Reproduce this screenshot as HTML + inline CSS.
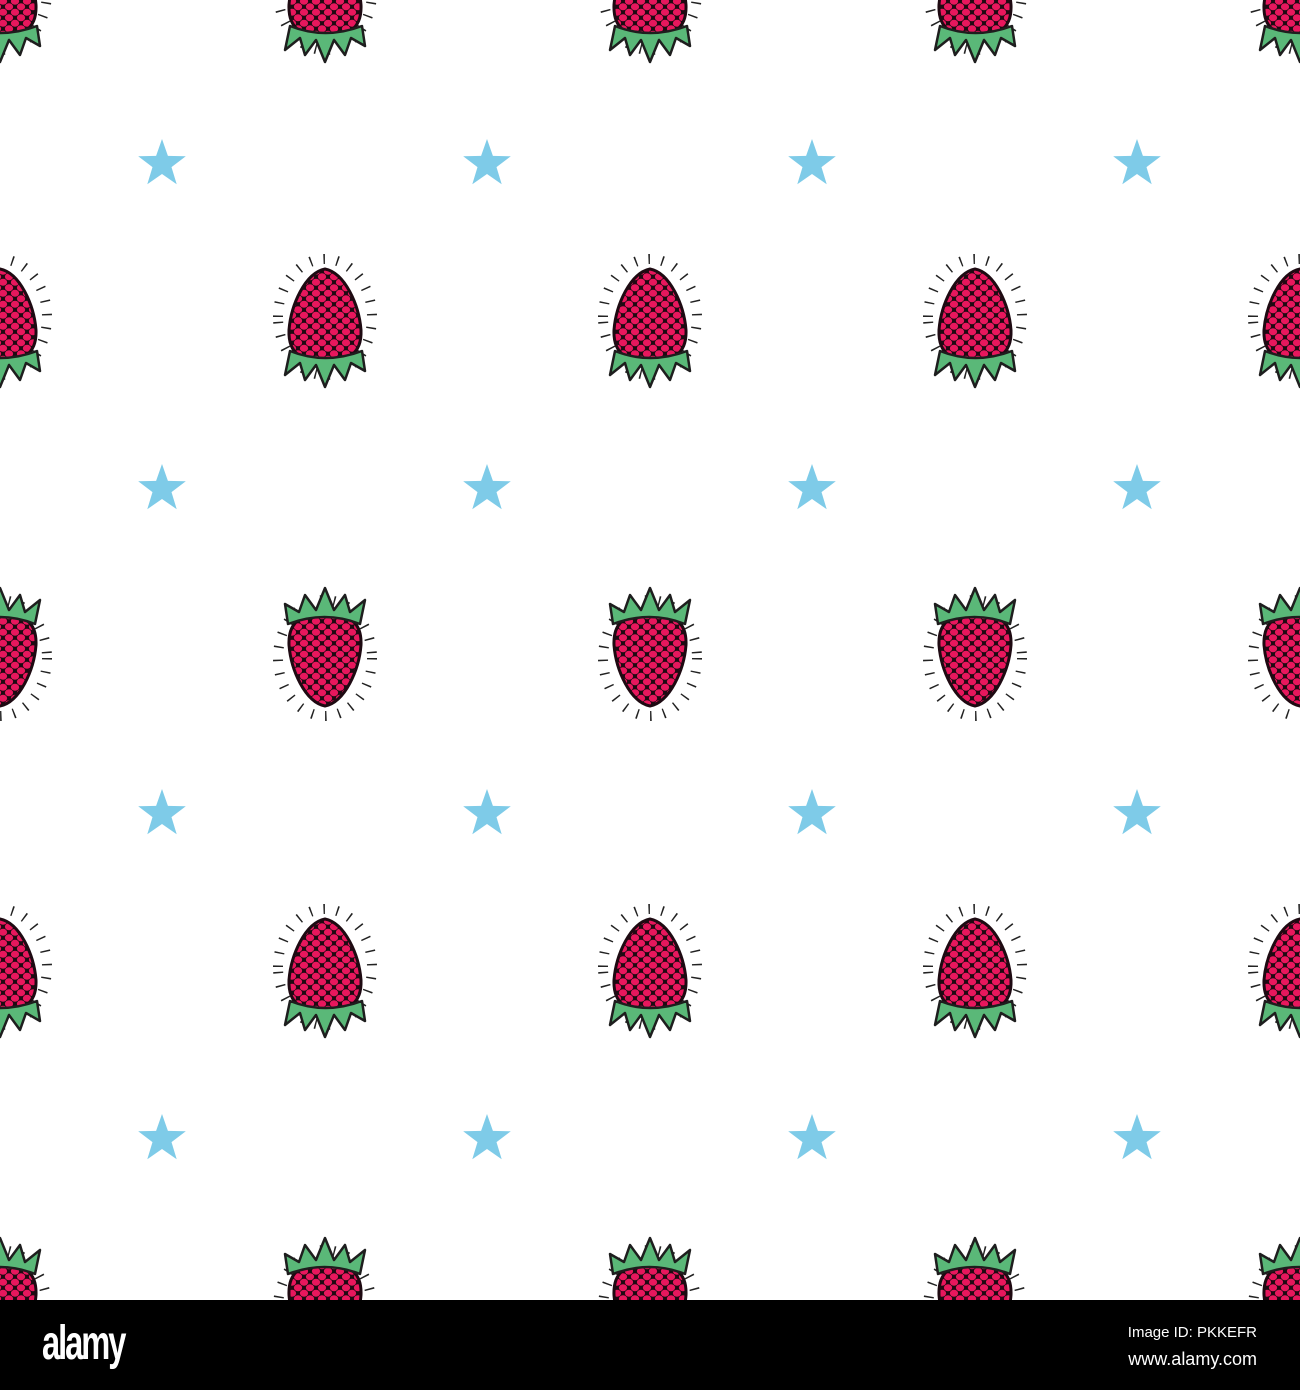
<!DOCTYPE html>
<html><head><style>
html,body{margin:0;padding:0;background:#fff;width:1300px;height:1390px;overflow:hidden}
.f{position:absolute;left:0;top:1300px;width:1300px;height:90px;background:#000;font-family:"Liberation Sans",sans-serif;color:#fff}
</style></head><body>
<svg width="1300" height="1300" style="position:absolute;left:0;top:0" xmlns="http://www.w3.org/2000/svg">
<defs>
<pattern id="s" width="12" height="11" patternUnits="userSpaceOnUse" x="-6" y="-4">
<rect width="12" height="11" fill="#1e0a12"/>
<ellipse cx="3" cy="2.75" rx="4.1" ry="3.5" fill="#e8175d"/>
<ellipse cx="9" cy="8.25" rx="4.1" ry="3.5" fill="#e8175d"/>
<ellipse cx="15" cy="2.75" rx="4.1" ry="3.5" fill="#e8175d"/>
<ellipse cx="-3" cy="8.25" rx="4.1" ry="3.5" fill="#e8175d"/>
<ellipse cx="3" cy="13.75" rx="4.1" ry="3.5" fill="#e8175d"/>
<ellipse cx="15" cy="13.75" rx="4.1" ry="3.5" fill="#e8175d"/>
<ellipse cx="9" cy="-2.75" rx="4.1" ry="3.5" fill="#e8175d"/>
</pattern>
<g id="r">
<ellipse cx="0" cy="8" rx="47" ry="58" fill="none" stroke="#222" stroke-width="10" stroke-dasharray="1.5 12"/>
<ellipse cx="0" cy="8" rx="41" ry="52" fill="#fff"/>
<path d="M0,-36 C22,-36 37,-30 36,-5 C34,20 20,52 0,56 C-20,52 -34,20 -36,-5 C-37,-30 -22,-36 0,-36Z" fill="url(#s)" stroke="#1e0a12" stroke-width="3"/>
<path d="M-37,-26 L-40,-46 L-26,-38 L-20,-55 L-9,-40 L0,-62 L9,-40 L20,-55 L25,-38 L40,-50 L35,-26 Q0,-40 -37,-26Z" fill="#5ab878" stroke="#1e1e1e" stroke-width="2.5" stroke-linejoin="round"/>
</g>
<polygon id="st" points="0,-25 5.9,-8.1 23.8,-7.7 9.5,3.1 14.7,20.2 0,10 -14.7,20.2 -9.5,3.1 -23.8,-7.7 -5.9,-8.1" fill="#7ecbe8"/>
</defs>
<g>
<use href="#r" transform="translate(0,0) rotate(180)"/><use href="#r" transform="translate(325,0) rotate(180)"/><use href="#r" transform="translate(650,0) rotate(180)"/><use href="#r" transform="translate(975,0) rotate(180)"/><use href="#r" transform="translate(1300,0) rotate(180)"/>
<use href="#r" transform="translate(0,325) rotate(180)"/><use href="#r" transform="translate(325,325) rotate(180)"/><use href="#r" transform="translate(650,325) rotate(180)"/><use href="#r" transform="translate(975,325) rotate(180)"/><use href="#r" transform="translate(1300,325) rotate(180)"/>
<use href="#r" transform="translate(0,975) rotate(180)"/><use href="#r" transform="translate(325,975) rotate(180)"/><use href="#r" transform="translate(650,975) rotate(180)"/><use href="#r" transform="translate(975,975) rotate(180)"/><use href="#r" transform="translate(1300,975) rotate(180)"/>
<use href="#r" x="0" y="650"/><use href="#r" x="325" y="650"/><use href="#r" x="650" y="650"/><use href="#r" x="975" y="650"/><use href="#r" x="1300" y="650"/>
<use href="#r" x="0" y="1300"/><use href="#r" x="325" y="1300"/><use href="#r" x="650" y="1300"/><use href="#r" x="975" y="1300"/><use href="#r" x="1300" y="1300"/>
</g>
<g>
<use href="#st" x="162" y="164"/><use href="#st" x="487" y="164"/><use href="#st" x="812" y="164"/><use href="#st" x="1137" y="164"/>
<use href="#st" x="162" y="489"/><use href="#st" x="487" y="489"/><use href="#st" x="812" y="489"/><use href="#st" x="1137" y="489"/>
<use href="#st" x="162" y="814"/><use href="#st" x="487" y="814"/><use href="#st" x="812" y="814"/><use href="#st" x="1137" y="814"/>
<use href="#st" x="162" y="1139"/><use href="#st" x="487" y="1139"/><use href="#st" x="812" y="1139"/><use href="#st" x="1137" y="1139"/>
</g>
</svg>
<div class="f">
<div style="position:absolute;left:42px;top:16px;font-size:48px;font-weight:bold;letter-spacing:-3px;transform:scaleX(0.68);transform-origin:left">alamy</div>
<div style="position:absolute;right:43px;top:24px;font-size:15px">Image ID: PKKEFR</div>
<div style="position:absolute;right:43px;top:49px;font-size:18px">www.alamy.com</div>
</div>
</body></html>
